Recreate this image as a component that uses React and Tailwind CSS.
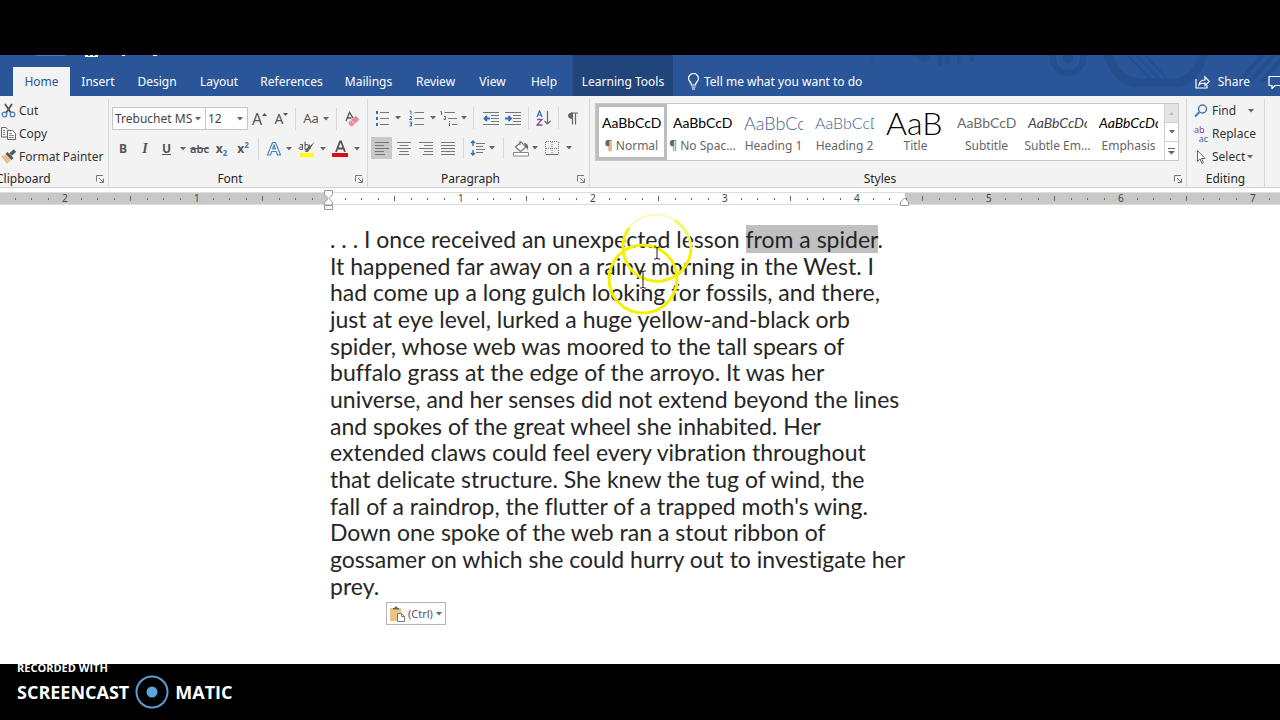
import React from "react";

const TABS_LEFT = ["Insert", "Design", "Layout", "References", "Mailings", "Review", "View", "Help"];
const TAB_WIDTHS = {
  Insert: "w-[56px]",
  Design: "w-[62px]",
  Layout: "w-[62px]",
  References: "w-[83px]",
  Mailings: "w-[71px]",
  Review: "w-[63px]",
  View: "w-[51px]",
  Help: "w-[52px]",
};

const LINES = [
  "It happened far away on a rainy morning in the West. I",
  "had come up a long gulch looking for fossils, and there,",
  "just at eye level, lurked a huge yellow-and-black orb",
  "spider, whose web was moored to the tall spears of",
  "buffalo grass at the edge of the arroyo. It was her",
  "universe, and her senses did not extend beyond the lines",
  "and spokes of the great wheel she inhabited. Her",
  "extended claws could feel every vibration throughout",
  "that delicate structure. She knew the tug of wind, the",
  "fall of a raindrop, the flutter of a trapped moth's wing.",
  "Down one spoke of the web ran a stout ribbon of",
  "gossamer on which she could hurry out to investigate her",
  "prey.",
];

const STYLES = [
  { name: "¶ Normal", sample: "AaBbCcDc", cls: "text-sm text-black" },
  { name: "¶ No Spac...", sample: "AaBbCcDc", cls: "text-sm text-black" },
  { name: "Heading 1", sample: "AaBbCc", cls: "text-lg font-light text-[#3f5f92]" },
  { name: "Heading 2", sample: "AaBbCcD", cls: "text-base font-light text-[#3f5f92]" },
  { name: "Title", sample: "AaB", cls: "text-[32px] font-light text-black" },
  { name: "Subtitle", sample: "AaBbCcD", cls: "text-sm text-[#6b6b6b]" },
  { name: "Subtle Em...", sample: "AaBbCcDc", cls: "text-sm italic text-[#444444]" },
  { name: "Emphasis", sample: "AaBbCcDc", cls: "text-sm italic text-black" },
];

function Caret() {
  return (
    <svg width="6" height="4" viewBox="0 0 6 4" aria-hidden="true">
      <path d="M0 0h6L3 3.5z" fill="#666" />
    </svg>
  );
}

function Icon({ w = 18, h = 18, children }) {
  return (
    <svg width={w} height={h} viewBox={`0 0 ${w} ${h}`} fill="none" aria-hidden="true" className="shrink-0">
      {children}
    </svg>
  );
}

function Tool({ label, className, children }) {
  return (
    <button type="button" aria-label={label} className={`flex h-[22px] shrink-0 items-center justify-center ${className}`}>
      {children}
    </button>
  );
}

function Drop({ label, className }) {
  return (
    <Tool label={label} className={className}>
      <Caret />
    </Tool>
  );
}

function Sep({ className }) {
  return (
    <span className={`flex h-[22px] shrink-0 justify-center ${className}`}>
      <span className="w-px bg-[#d8d8d8]" />
    </span>
  );
}

function Launcher({ label }) {
  return (
    <button type="button" aria-label={label} className="w-4 pl-1">
      <Icon w={8} h={8}>
        <path d="M.5 6.500V.5H7M3 3l4 4M7.500 3.500v4h-4" stroke="#777" />
      </Icon>
    </button>
  );
}

function Group({ title, className, launcher, children }) {
  return (
    <section className={`flex flex-col border-r border-[#d8d8d8] ${className}`}>
      <div className="flex-1">{children}</div>
      <div className="flex h-4 items-center text-[#262626]">
        <span className="flex-1 text-center">{title}</span>
        {launcher && <Launcher label={`${title} settings`} />}
      </div>
    </section>
  );
}

function TabBar() {
  return (
    <header className="relative flex h-[41px] items-stretch overflow-hidden bg-[#2a5699] text-white">
      <svg className="absolute top-0 right-0" width="420" height="41" viewBox="0 0 420 41" fill="none" aria-hidden="true">
        <g stroke="#244e8d">
          <path d="M12 0v9" strokeWidth="2" />
          <path d="M55 0h15c-1 9-8 9-15 0z" fill="#244e8d" />
          <path d="M80 0v12M87 0v9M99 0v9M112 0v6" strokeWidth="4" />
          <circle cx="208" cy="3" r="15" strokeWidth="6" />
          <circle cx="208" cy="3" r="5" fill="#244e8d" />
          <path d="M248 0c8 20 17 28 34 28h37c12-4 20-14 24-28" strokeWidth="9" />
          <path d="M267 0l28 28M276 0l27 28M285 0l26 28" strokeWidth="2" />
          <path d="M403 0l-27 30M414 0l-27 30M425 0l-24 27" strokeWidth="4" />
        </g>
      </svg>
      <svg className="absolute top-0 left-[36px]" width="130" height="3" viewBox="0 0 130 3" aria-hidden="true">
        <path d="M0 0h29v1H0z" fill="#537bb5" />
        <path d="M49 0h13v2H49zM86 0h3v1h-3zM117 0h4v1h-4z" fill="#fff" />
        <path d="M52 0h2v1h-2zM57 0h2v1h-2z" fill="#2a5699" />
      </svg>
      <nav className="relative flex items-end">
        <a href="#home" className="ml-[13px] flex h-[29px] w-[57px] items-center justify-center bg-[#f3f3f3] text-[#2a5699]">
          Home
        </a>
        {TABS_LEFT.map((t) => (
          <a key={t} href={`#${t}`} className={`flex h-[29px] items-center justify-center ${TAB_WIDTHS[t]}`}>
            {t}
          </a>
        ))}
        <a href="#learning" className="ml-[3px] flex h-full w-[100px] items-end justify-center bg-[#21447b]">
          <span className="flex h-[29px] items-center">Learning Tools</span>
        </a>
        <button type="button" className="ml-[14px] flex h-[29px] items-center gap-1">
          <Icon w={13} h={17}>
            <path d="M4.500 12c0-3-3-3.500-3-6.500a5 5 0 0 1 10 0c0 3-3 3.500-3 6.500zM4.500 14h4M5 16h3" stroke="#fff" strokeWidth="1.200" />
          </Icon>
          Tell me what you want to do
        </button>
      </nav>
      <div className="relative ml-auto flex items-end">
        <button type="button" className="flex h-[29px] items-center gap-2">
          <Icon w={15} h={14}>
            <path d="M1 4v9h11v-3M4 10c.5-4 2.500-5 6-5V2l4.500 4.500L10 10.500V8C7 8 5.500 8 4 10z" stroke="#fff" strokeWidth="1.200" />
          </Icon>
          Share
        </button>
        <button type="button" aria-label="Comments" className="ml-[18px] flex h-[29px] w-[12px] items-center overflow-hidden">
          <Icon w={16} h={14}>
            <path d="M1 1.500h14v9H7l-3 3v-3H1z" stroke="#fff" strokeWidth="1.200" />
          </Icon>
        </button>
      </div>
    </header>
  );
}

function Clipboard() {
  const row = "flex h-[23px] items-center gap-[3px]";
  return (
    <section className="flex w-[109px] flex-col border-r border-[#d8d8d8]">
      <div className="flex-1 pl-px">
        <button type="button" className={row}>
          <Icon w={15} h={15}>
            <path d="M4 1l6 9M11 1L5 10" stroke="#555" strokeWidth="1.800" />
            <circle cx="3.500" cy="11.500" r="2.300" stroke="#4a7ab5" strokeWidth="1.200" />
            <circle cx="11.500" cy="11.500" r="2.300" stroke="#4a7ab5" strokeWidth="1.200" />
          </Icon>
          Cut
        </button>
        <button type="button" className={row}>
          <Icon w={15} h={15}>
            <path d="M6 11H.5V1.500H5L7 3.500" stroke="#666" />
            <path d="M6.500 4.500h5l3 3v6h-8z" fill="#fff" stroke="#666" />
            <path d="M2 4.500h2M2 6.500h2M2 8.500h2M8 7.500h3M8 9.500h5M8 11.500h5" stroke="#7a8da5" />
          </Icon>
          Copy
        </button>
        <button type="button" className={row}>
          <Icon w={15} h={15}>
            <path d="M0 7l5-1 5 5-4 4z" fill="#e8bf85" />
            <path d="M4.500 5l2-2 6 6-2 2z" fill="#555" />
            <path d="M9.500 5.500L14 1.500" stroke="#555" strokeWidth="3.500" />
          </Icon>
          Format Painter
        </button>
      </div>
      <div className="flex h-4 items-center justify-between text-[#262626]">
        <span className="-ml-1">Clipboard</span>
        <Launcher label="Clipboard settings" />
      </div>
    </section>
  );
}

function Combo({ label, value, className }) {
  return (
    <label className={`relative flex h-[23px] items-center border border-[#c6c6c6] bg-white ${className}`}>
      <select aria-label={label} defaultValue={value} className="h-full w-full appearance-none bg-transparent pl-[2px] text-[#444]">
        <option>{value}</option>
      </select>
      <span className="pointer-events-none absolute inset-y-0 right-1 flex items-center">
        <Caret />
      </span>
    </label>
  );
}

function FontGroup() {
  return (
    <Group title="Font" launcher className="w-[259px]">
      <div className="flex flex-col gap-2 pt-[8px] pl-[3px] text-[#555]">
        <div className="flex items-center">
          <Combo label="Font" value="Trebuchet MS" className="w-[94px]" />
          <Combo label="Font size" value="12" className="-ml-px w-[43px]" />
          <Tool label="Grow font" className="w-[23px]">
            <span className="text-base">A</span>
            <span className="-mt-2"><svg width="5" height="3" viewBox="0 0 5 3"><path d="M0 3h5L2.500 0z" fill="#555" /></svg></span>
          </Tool>
          <Tool label="Shrink font" className="w-[21px]">
            <span className="text-sm">A</span>
            <span className="-mt-2"><svg width="5" height="3" viewBox="0 0 5 3"><path d="M0 0h5L2.500 3z" fill="#555" /></svg></span>
          </Tool>
          <Sep className="w-[6px]" />
          <Tool label="Change case" className="w-[36px] gap-1">
            <span className="text-[13px]">Aa</span>
            <Caret />
          </Tool>
          <Sep className="w-[5px]" />
          <Tool label="Clear formatting" className="w-[26px]">
            <Icon w={16} h={16}>
              <path d="M2 10L5.500 1.500 9 7M3.500 7h4" stroke="#555" strokeWidth="1.300" />
              <path d="M4 12l7.500-7.500 4 4L8 15.500H7z" fill="#e98ba0" />
              <path d="M6.500 9l4.500 4" stroke="#f8d5dc" />
            </Icon>
          </Tool>
        </div>
        <div className="flex items-center">
          <Tool label="Bold" className="w-[22px] font-bold">B</Tool>
          <Tool label="Italic" className="w-[22px] font-['Liberation_Serif',serif] text-sm font-bold italic">I</Tool>
          <Tool label="Underline" className="w-[21px] font-bold underline">U</Tool>
          <Drop label="Underline style" className="w-[11px]" />
          <Tool label="Strikethrough" className="w-[23px] text-[11px] font-semibold line-through">abc</Tool>
          <Tool label="Subscript" className="w-[21px] font-bold">x<span className="pt-2 text-[8px] text-[#4a7ab5]">2</span></Tool>
          <Tool label="Superscript" className="w-[22px] font-bold">x<span className="pb-2 text-[8px] text-[#4a7ab5]">2</span></Tool>
          <Sep className="w-[9px]" />
          <Tool label="Text effects" className="w-[21px]">
            <Icon w={16} h={16}>
              <path d="M1.500 14L6.500 1.500h3l5 12.500h-3l-1.200-3.500H5.700L4.500 14zM6.500 8h3L8 4z" fill="#fff" stroke="#4a84c4" strokeWidth="1.200" />
            </Icon>
          </Tool>
          <Drop label="Text effect options" className="w-[10px]" />
          <Tool label="Highlight" className="w-[25px]">
            <Icon w={18} h={18}>
              <path d="M2 13h14v4H2z" fill="#ff0" />
              <path d="M16.500 2L10 12H7l1-3z" fill="#666" />
              <path d="M2 4.500h2.500v5H2.500c-2 0-2-2.500 0-2.500h2M7 1.500v8h2c2-1 2-5 0-5H7M11 4.500l1.500 4" stroke="#555" />
            </Icon>
          </Tool>
          <Drop label="Highlight colour" className="w-[8px]" />
          <Tool label="Font colour" className="w-[26px]">
            <Icon w={17} h={18}>
              <path d="M4 12L8 1.500h1L13 12M5.500 8.500h6" stroke="#555" strokeWidth="1.800" />
              <path d="M0 13h16v4H0z" fill="#e00b12" />
            </Icon>
          </Tool>
          <Drop label="Font colours" className="w-[8px]" />
        </div>
      </div>
    </Group>
  );
}

function Bars({ d }) {
  return (
    <Icon w={16} h={14}>
      <path d={d} stroke="#777" />
    </Icon>
  );
}

function ParagraphGroup() {
  return (
    <Group title="Paragraph" launcher className="w-[222px]">
      <div className="flex flex-col gap-2 pt-[8px] pl-[3px]">
        <div className="flex items-center">
          <Tool label="Bullets" className="w-[22px]">
            <Icon w={14} h={16}>
              <path d="M5 2.500h9M5 8.500h9M5 14.500h9" stroke="#777" />
              <path d="M1 1h2v3H1zM1 7h2v3H1zM1 13h2v3H1z" fill="#3470ad" />
            </Icon>
          </Tool>
          <Drop label="Bullet library" className="w-[10px]" />
          <Tool label="Numbering" className="w-[26px]">
            <Icon w={15} h={17}>
              <path d="M5.500 2.500H15M5.500 8.500H15M5.500 14.500H15" stroke="#777" />
              <path d="M.5 1h1.500v3.500M.5 6.500h2v1.500l-2 1.500h2.500M.5 12h2v4h-2M1 14h1.500" stroke="#3470ad" />
            </Icon>
          </Tool>
          <Drop label="Number library" className="w-[7px]" />
          <Tool label="Multilevel list" className="w-[25px]">
            <Icon w={17} h={17}>
              <path d="M4.500 2.500H15M8 8.500h9M12 14.500h5" stroke="#777" />
              <path d="M.5 1.500h1v3.500M4 6.500h1.500v3H4V8.500M9.500 11v1M9.500 13v3" stroke="#3470ad" />
            </Icon>
          </Tool>
          <Drop label="List levels" className="w-[6px]" />
          <Sep className="w-[13px]" />
          <Tool label="Decrease indent" className="w-[22px]">
            <Icon w={16} h={14}>
              <path d="M0 1.500h16M8 4.500h8M8 7.500h8M8 10.500h8M0 13.500h16" stroke="#777" />
              <path d="M7 7.500H2M4 5L1.500 7.500 4 10" stroke="#2f6eb5" strokeWidth="1.800" />
            </Icon>
          </Tool>
          <Tool label="Increase indent" className="w-[22px]">
            <Icon w={16} h={14}>
              <path d="M0 1.500h16M8 4.500h8M8 7.500h8M8 10.500h8M0 13.500h16" stroke="#777" />
              <path d="M0 7.500h5M3.500 5L6 7.500 3.500 10" stroke="#2f6eb5" strokeWidth="1.800" />
            </Icon>
          </Tool>
          <Sep className="w-[9px]" />
          <Tool label="Sort" className="w-[20px]">
            <Icon w={15} h={16}>
              <path d="M1 7L3.500.8 6 7M2 5h3" stroke="#3470ad" strokeWidth="1.200" />
              <path d="M1 9.500h5L1 15h5.500" stroke="#8a4a9e" strokeWidth="1.300" />
              <path d="M11.500 1v13M8.500 11l3 3 3-3" stroke="#666" strokeWidth="1.200" />
            </Icon>
          </Tool>
          <Sep className="w-[10px]" />
          <Tool label="Show marks" className="w-[19px]">
            <Icon w={11} h={13}>
              <path d="M5.500 12.500V1M8.500 12.500V1M4 1h7" stroke="#666" strokeWidth="1.200" />
              <path d="M5.500.5v6.500C-.5 7-.5.500 5.500.500z" fill="#666" />
            </Icon>
          </Tool>
        </div>
        <div className="flex items-center">
          <Tool label="Align left" className="w-[21px] bg-[#c8c8c8]"><Bars d="M1 1.500h14M1 4.500h9M1 7.500h14M1 10.500h9M1 13.500h10" /></Tool>
          <Tool label="Centre" className="w-[23px]"><Bars d="M1 1.500h14M3.500 4.500h9M1 7.500h14M3.500 10.500h9M3 13.500h10" /></Tool>
          <Tool label="Align right" className="w-[22px]"><Bars d="M1 1.500h14M6 4.500h9M1 7.500h14M6 10.500h9M5 13.500h10" /></Tool>
          <Tool label="Justify" className="w-[22px]"><Bars d="M1 1.500h14M1 4.500h14M1 7.500h14M1 10.500h14M1 13.500h14" /></Tool>
          <Sep className="w-[8px]" />
          <Tool label="Line spacing" className="w-[21px]">
            <Icon w={15} h={16}>
              <path d="M6 3.500h9M6 6.500h7M6 9.500h9M6 12.500h7" stroke="#777" />
              <path d="M3 1v5M1 3l2-2 2 2M3 10v5M1 13l2 2 2-2" stroke="#3470ad" strokeWidth="1.400" />
            </Icon>
          </Tool>
          <Drop label="Spacing options" className="w-[8px]" />
          <Sep className="w-[15px]" />
          <Tool label="Shading" className="w-[20px]">
            <Icon w={17} h={17}>
              <path d="M2.500 7L8 2l5 5-5.500 4.500zM7 5V1" fill="#fff" stroke="#777" strokeWidth="1.200" />
              <path d="M11 3c3 0 4.500 2 4 7l-2-3z" fill="#45698f" />
              <path d="M.5 12.500h15v3.500H.5z" fill="#fff" stroke="#888" />
            </Icon>
          </Tool>
          <Drop label="Shading colours" className="w-[8px]" />
          <Tool label="Borders" className="w-[25px]">
            <Icon w={14} h={14}>
              <path d="M1 .5h12M.5 1v12M13.500 1v12M7 1v12M1 7.500h12" stroke="#777" strokeDasharray="1 1" />
              <path d="M.5 13.500h13" stroke="#666" />
            </Icon>
          </Tool>
          <Drop label="Border options" className="w-[9px]" />
        </div>
      </div>
    </Group>
  );
}

function StylesGroup() {
  return (
    <Group title="Styles" launcher className="min-w-0 flex-1">
      <div className="pt-1 pr-[7px] pl-[5px]">
        <div className="flex h-[58px] border border-[#c8c8c8] bg-white">
          <div className="flex min-w-0 flex-1 overflow-hidden">
            {STYLES.map((s, i) => (
              <button
                key={s.name}
                type="button"
                className={`flex h-full min-w-0 flex-1 flex-col border-[3px] ${i === 0 ? "border-[#bdbdbd]" : "border-transparent"}`}
              >
                <span className="flex h-[31px] w-full px-[3px]">
                  <span className={`flex w-full items-center overflow-hidden font-[Lato,sans-serif] leading-[24px] whitespace-nowrap ${s.cls}`}>
                    {s.sample}
                  </span>
                </span>
                <span className="flex h-4 w-full items-center justify-center whitespace-nowrap text-[#666]">{s.name}</span>
              </button>
            ))}
          </div>
          <div className="flex w-[14px] flex-col divide-y divide-[#d0d0d0] border-l border-[#d0d0d0]">
            <button type="button" aria-label="Previous styles" className="flex flex-1 items-center justify-center bg-[#e4e4e4]">
              <svg width="5" height="3" viewBox="0 0 5 3"><path d="M0 3h5L2.500 0z" fill="#bbb" /></svg>
            </button>
            <button type="button" aria-label="Next styles" className="flex flex-1 items-center justify-center"><Caret /></button>
            <button type="button" aria-label="More styles" className="flex flex-1 items-center justify-center">
              <svg width="7" height="7" viewBox="0 0 7 7"><path d="M0 0h7v1H0zM0 3h7L3.500 6.500z" fill="#666" /></svg>
            </button>
          </div>
        </div>
      </div>
    </Group>
  );
}

function EditingGroup() {
  const row = "flex h-[23px] items-center gap-1";
  return (
    <Group title="Editing" className="w-[78px]">
      <div className="pl-[7px]">
        <button type="button" className={row}>
          <Icon w={14} h={14}>
            <circle cx="8.500" cy="5" r="4" stroke="#4a78ae" strokeWidth="1.500" />
            <path d="M5.500 8L1 12.500" stroke="#4a78ae" strokeWidth="2" />
          </Icon>
          Find
          <span className="pl-2"><Caret /></span>
        </button>
        <button type="button" className={row}>
          <span className="flex w-[14px] flex-col text-left text-[9px] leading-[9px]">
            <span className="text-[#7b4d8c]">ab</span>
            <span className="flex justify-end text-[#3470ad]">ac</span>
          </span>
          Replace
        </button>
        <button type="button" className={row}>
          <Icon w={14} h={16}>
            <path d="M3.500 1.500v11l2.500-2.500 2 4.500 1.500-.8-2-4.200H11z" fill="#fff" stroke="#666" />
          </Icon>
          <span className="flex items-center gap-[2px]">Select <Caret /></span>
        </button>
      </div>
    </Group>
  );
}

const INCHES = ["2", "1", "", "1", "2", "3", "4", "5", "6", "7", "8"];

function Ruler() {
  return (
    <div className="relative mt-[4px] h-[13px] border-y border-[#dcdcdc]">
      <div className="absolute inset-0 flex overflow-hidden">
        <div className="w-[329px] bg-[#c8c8c8]" />
        <div className="w-[576px] bg-white" />
        <div className="flex-1 bg-[#c8c8c8]" />
      </div>
      <div className="relative h-full overflow-hidden">
        <div className="-ml-[59px] flex h-full">
          {INCHES.map((n, i) => (
            <div key={i} className="grid w-[132px] shrink-0 grid-cols-8 items-center justify-items-center">
              {[1, 2, 3, 4, 5, 6, 7].map((k) => (
                <span key={k} className={k === 4 ? "h-[5px] w-px bg-[#666]" : "h-[2px] w-px bg-[#666]"} />
              ))}
              <span className="text-[10px] leading-[11px] text-[#444]">{n}</span>
            </div>
          ))}
        </div>
      </div>
      <svg className="absolute top-[-3px] left-[324px]" width="10" height="22" viewBox="0 0 10 22" aria-hidden="true">
        <path d="M.5.500h8v4L5 8.500l3.500 4v2.500h-8v-2.500l3.500-4-3.500-4zM.5 15.500h8v4h-8z" fill="#fff" stroke="#999" />
      </svg>
      <svg className="absolute top-[4px] left-[900px]" width="10" height="10" viewBox="0 0 10 10" aria-hidden="true">
        <path d="M.5 8.500V5L4.500 1l4 4v3.500z" fill="#fff" stroke="#999" />
      </svg>
    </div>
  );
}

function Pointers() {
  return (
    <svg className="pointer-events-none absolute top-[8px] left-[600px]" width="100" height="105" viewBox="0 0 100 105" fill="none" aria-hidden="true">
      <path d="M29 15A34 34 0 0 1 74 7" stroke="#fbf9b5" strokeWidth="2" />
      <path d="M74 7A34 34 0 0 1 91 36" stroke="#f8f565" strokeWidth="3" />
      <path d="M29 15A34 34 0 1 0 91 36" stroke="#f4f000" strokeWidth="3" />
      <circle cx="43" cy="66" r="34" stroke="#f4f000" strokeWidth="3" />
      <path d="M54 34h2l1 1 1-1h2M57 35v11M54 46h2l1-1 1 1h2M40 58h2l1 1 1-1h2M43 59v16M40 75h2l1-1 1 1h2" stroke="#222" />
    </svg>
  );
}

export default function App() {
  return (
    <div className="flex min-h-screen flex-col bg-white font-['Noto_Sans',sans-serif] text-xs text-[#333]">
      <div className="h-[55px] bg-black" />
      <TabBar />
      <div className="flex h-[92px] border-b border-[#d0d0d0] bg-[#f3f3f3] pt-[3px]">
        <Clipboard />
        <FontGroup />
        <ParagraphGroup />
        <StylesGroup />
        <EditingGroup />
        <div className="w-[15px]" />
      </div>
      <Ruler />
      <main className="relative flex-1 pt-[21px] pl-[330px]">
        <p className="font-[Lato,sans-serif] text-[23px] leading-[1.16] whitespace-nowrap text-[#262626] [font-variant-ligatures:none]">
          <span className="block">
            . . . I once received an unexpected lesson <mark className="bg-[#c0c0c0] text-inherit">from a spider</mark>.
          </span>
          {LINES.map((l) => (
            <span key={l} className="block">{l}</span>
          ))}
        </p>
        <button type="button" className="mt-[3px] ml-[56px] flex h-[23px] w-[60px] items-center gap-[3px] border border-[#b5b5b5] bg-white pl-[3px] text-[#555]">
          <Icon w={15} h={16}>
            <path d="M0 2h11v13H0z" fill="#edc583" />
            <path d="M3 3.500V2h1.500c0-2 3-2 3 0H9v1.500z" fill="#666" />
            <path d="M7.500 7.500h4l3 3v5h-7z" fill="#fff" stroke="#777" />
            <path d="M11.500 7.500v3h3" stroke="#777" />
          </Icon>
          <span className="text-[11px] whitespace-nowrap">(Ctrl)</span>
          <Caret />
        </button>
        <Pointers />
      </main>
      <footer className="flex h-[56px] flex-col bg-black pl-[17px] font-['Open_Sans',sans-serif] font-bold text-white">
        <span className="text-[11px] leading-[8px]">RECORDED WITH</span>
        <div className="mt-[3px] flex items-center gap-[6px] text-lg">
          <span>SCREENCAST</span>
          <Icon w={34} h={34}>
            <circle cx="17" cy="17" r="15.500" stroke="#5a9bd0" strokeWidth="2" />
            <circle cx="17" cy="17" r="5.500" fill="#5aa5dc" />
          </Icon>
          <span>MATIC</span>
        </div>
      </footer>
    </div>
  );
}
